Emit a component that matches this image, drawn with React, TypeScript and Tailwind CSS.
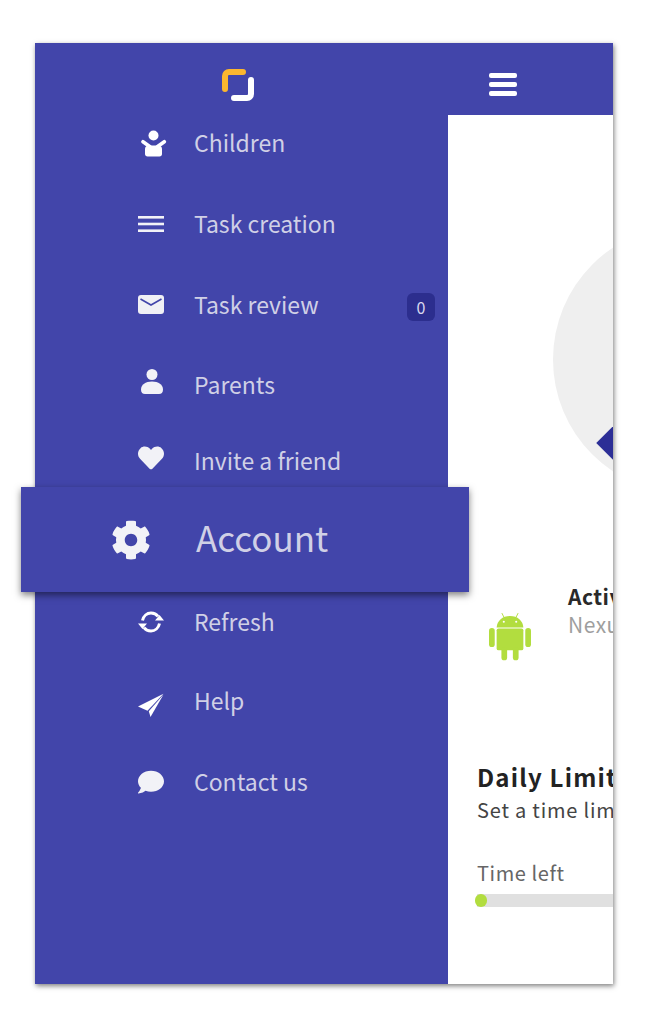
import React from 'react';
import { FaCog, FaHeart, FaComment } from 'react-icons/fa';

const font = "font-['Noto_Sans_CJK_JP','Liberation_Sans',sans-serif]";

const ChildIcon = () => (
  <svg width="26" height="27" viewBox="0 0 26 27" fill="white" className="ml-[5px]">
    <circle cx="12.500" cy="5.500" r="5" />
    <path d="M2 11.700l7 5M23.300 11.700l-7 5" stroke="white" strokeWidth="3.600" strokeLinecap="round" />
    <path d="M7.500 15.500h10c2 0 3.500 1.500 3.500 3.500v5c0 1.500-1 2.500-2.500 2.500h-12c-1.500 0-2.500-1-2.500-2.500v-5c0-2 1.500-3.500 3.500-3.500z" />
  </svg>
);

const LinesIcon = () => (
  <svg width="26" height="16" viewBox="0 0 26 16" fill="#f2f2f7">
    <rect y="0" width="26" height="2.600" />
    <rect y="6.700" width="26" height="2.600" />
    <rect y="13.400" width="26" height="2.600" />
  </svg>
);

const MailIcon = () => (
  <svg width="26" height="19" viewBox="0 0 26 19">
    <rect width="26" height="19" rx="3" fill="#f0f0f5" />
    <path d="M2.500 4l10.500 6 10.500-6" fill="none" stroke="#4245aa" strokeWidth="1.600" />
  </svg>
);

const PersonIcon = () => (
  <svg width="22" height="26" viewBox="0 0 22 26" fill="#f2f2f7" className="-mt-[6px] ml-[1px]">
    <circle cx="11" cy="5.500" r="5.500" />
    <path d="M0 20.500C0 15.500 4.500 12.500 11 12.500S22 15.500 22 20.500C22 23.500 20.500 25 18 25H4C1.500 25 0 23.500 0 20.500z" />
  </svg>
);

const RefreshIcon = () => (
  <svg width="26" height="22" viewBox="0 0 26 22" fill="none">
    <path d="M4.500 9.500C5.500 5 9 2 13 2c3 0 5.500 1.300 7 3.400" stroke="white" strokeWidth="3" />
    <path d="M21.500 12.500C20.500 17 17 20 13 20c-3 0-5.500-1.300-7-3.400" stroke="white" strokeWidth="3" />
    <path d="M17 9.500h9L21.500 4zM0 12.500h9L4.500 18z" fill="white" />
  </svg>
);

const PlaneIcon = () => (
  <svg width="28" height="26" viewBox="0 0 28 26" fill="white" className="mt-[8px]">
    <path d="M1 14.500L26.500 1.800 10.500 18.800z" />
    <path d="M26.500 2.500L13.500 25 11.800 19.300z" />
  </svg>
);

const AndroidIcon = () => (
  <svg width="42" height="49" viewBox="0 0 44 50" fill="#b2dd3f">
    <path d="M13.500 0.500l2.500 5M30.500 0.500l-2.500 5" stroke="#b2dd3f" strokeWidth="1" />
    <path d="M8 15.500C8.500 8.500 14 3.500 22 3.500s13.500 5 14 12z" />
    <rect x="8" y="16.500" width="28" height="23" rx="2" />
    <rect x="0" y="16" width="6" height="20" rx="3" />
    <rect x="38" y="16" width="6" height="20" rx="3" />
    <rect x="13" y="36" width="6" height="14" rx="3" />
    <rect x="25" y="36" width="6" height="14" rx="3" />
    <circle cx="15.500" cy="9.500" r="1.100" fill="white" />
    <circle cx="28.500" cy="9.500" r="1.100" fill="white" />
  </svg>
);

const Logo = () => (
  <svg width="32" height="32" viewBox="0 0 32 32" fill="none" strokeWidth="6" strokeLinecap="round">
    <path d="M3 20V7a4 4 0 0 1 4-4H21" stroke="#fbb62f" />
    <path d="M29 11V25a4 4 0 0 1-4 4H12" stroke="white" />
  </svg>
);

function NavRow({ icon, label, className, badge }: { icon: React.ReactNode; label: string; className: string; badge?: string }) {
  return (
    <div className={`flex items-center ${className}`}>
      <div className="w-[32px] ml-[100px] flex justify-center shrink-0">{icon}</div>
      <span className="ml-[27px] -mt-[1px] text-[23px] leading-none text-[#d0d0e6]">{label}</span>
      {badge && (
        <span className="ml-auto mr-[13px] mt-[4px] w-[28px] h-[28px] rounded-[6px] bg-[#2c2e8e] text-[#d8d8ee] text-[16px] flex items-center justify-center">
          {badge}
        </span>
      )}
    </div>
  );
}

export default function App() {
  return (
    <div className={`${font} bg-white w-[648px] h-[1024px] pt-[43px] pl-[35px]`}>
      <div className="w-[578px] h-[941px] flex shadow-[1px_2px_5px_rgba(0,0,0,0.5)]">
        <aside className="w-[413px] shrink-0 bg-[#4245aa] relative z-10">
          <div className="h-[60px] pt-[26px] pl-[187px]">
            <Logo />
          </div>
          <NavRow className="h-[80px]" icon={<ChildIcon />} label="Children" />
          <NavRow className="h-[81px]" icon={<LinesIcon />} label="Task creation" />
          <NavRow className="h-[81px]" icon={<MailIcon />} label="Task review" badge="0" />
          <NavRow className="h-[80px]" icon={<PersonIcon />} label="Parents" />
          <NavRow className="h-[72px]" icon={<FaHeart className="text-[#f2f2f7] text-[26px] -mt-[6px]" />} label="Invite a friend" />
          <div className="-mt-[10px] -ml-[14px] w-[448px] h-[105px] bg-[#4245aa] flex items-center relative shadow-[0_3px_7px_rgba(0,0,0,0.5)]">
            <FaCog className="ml-[90px] text-[40px] text-[#f2f2f7] shrink-0" />
            <span className="ml-[45px] -mt-[6px] text-[35px] leading-none text-[#d0d0e6]">Account</span>
          </div>
          <NavRow className="h-[60px]" icon={<RefreshIcon />} label="Refresh" />
          <NavRow className="h-[98px]" icon={<PlaneIcon />} label="Help" />
          <NavRow className="h-[64px]" icon={<FaComment className="text-[#f2f2f7] text-[26px]" />} label="Contact us" />
        </aside>

        <main className="w-[165px] shrink-0 flex flex-col overflow-hidden bg-white">
          <header className="h-[72px] shrink-0 bg-[#4245aa] pl-[41px] pt-[30px]">
            <div className="w-[28px] flex flex-col gap-[4px]">
              <div className="h-[5px] rounded-[2px] bg-white" />
              <div className="h-[5px] rounded-[2px] bg-white" />
              <div className="h-[5px] rounded-[2px] bg-white" />
            </div>
          </header>

          <div className="w-[480px] shrink-0">
            <div className="mt-[110px] ml-[105px] w-[269px] h-[269px] rounded-full bg-[#efefef] relative overflow-hidden">
              <div className="absolute left-[56px] top-[204px] w-[28px] h-[28px] rotate-45 bg-[#2c2e96] scale-[1.35]" />
            </div>

            <div className="mt-[88px] ml-[41px] flex">
              <div className="mt-[30px]">
                <AndroidIcon />
              </div>
              <div className="ml-[37px]">
                <div className="text-[21px] leading-[28px] font-bold text-[#2a2a2a] tracking-[0.5px]">Active</div>
                <div className="text-[21px] leading-[28px] text-[#9e9e9e] tracking-[0.5px]">Nexus 5</div>
              </div>
            </div>

            <div className="mt-[97px] ml-[29px]">
              <div className="text-[24px] leading-[37px] font-bold text-[#222] tracking-[1.2px]">Daily Limits</div>
              <div className="text-[20px] leading-[30px] text-[#444] tracking-[0.8px]">Set a time limit</div>
              <div className="mt-[33px] text-[20px] leading-[30px] text-[#666] tracking-[0.6px]">Time left</div>
              <div className="mt-[6px] h-[13px] bg-[#e0e0e0] relative">
                <div className="absolute -left-[2px] top-0 w-[12px] h-[13px] rounded-full bg-[#b2dd3f]" />
              </div>
            </div>
          </div>
        </main>
      </div>
    </div>
  );
}
